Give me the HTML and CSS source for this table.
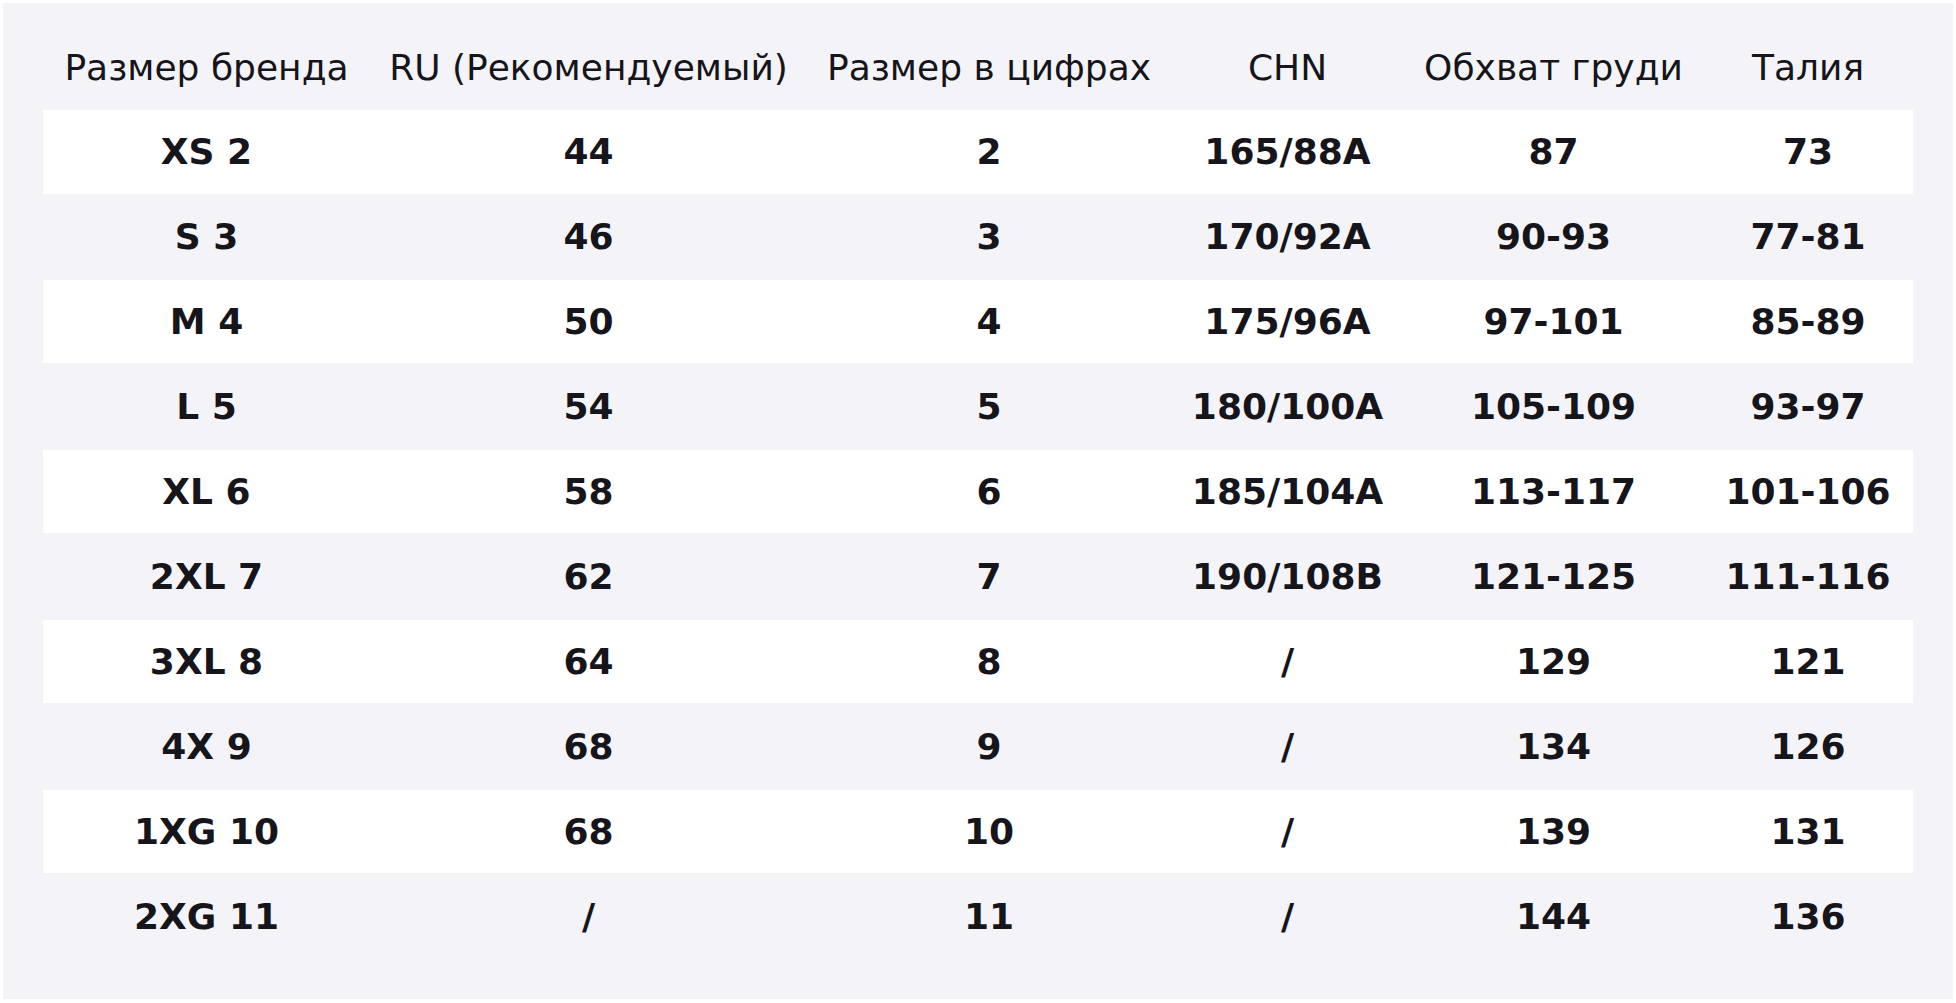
FILE: index.html
```html
<!DOCTYPE html>
<html lang="ru">
<head>
<meta charset="utf-8">
<title>Таблица размеров</title>
<link rel="stylesheet" href="styles.css">
</head>
<body>
<div class="panel">
  <table class="sizes">
    <colgroup>
      <col class="c1"><col class="c2"><col class="c3"><col class="c4"><col class="c5"><col class="c6">
    </colgroup>
    <thead>
      <tr>
        <th>Размер бренда</th>
        <th>RU (Рекомендуемый)</th>
        <th>Размер в цифрах</th>
        <th>CHN</th>
        <th>Обхват груди</th>
        <th>Талия</th>
      </tr>
    </thead>
    <tbody>
      <tr><td>XS 2</td><td>44</td><td>2</td><td>165/88A</td><td>87</td><td>73</td></tr>
      <tr><td>S 3</td><td>46</td><td>3</td><td>170/92A</td><td>90-93</td><td>77-81</td></tr>
      <tr><td>M 4</td><td>50</td><td>4</td><td>175/96A</td><td>97-101</td><td>85-89</td></tr>
      <tr><td>L 5</td><td>54</td><td>5</td><td>180/100A</td><td>105-109</td><td>93-97</td></tr>
      <tr><td>XL 6</td><td>58</td><td>6</td><td>185/104A</td><td>113-117</td><td>101-106</td></tr>
      <tr><td>2XL 7</td><td>62</td><td>7</td><td>190/108B</td><td>121-125</td><td>111-116</td></tr>
      <tr><td>3XL 8</td><td>64</td><td>8</td><td>/</td><td>129</td><td>121</td></tr>
      <tr><td>4X 9</td><td>68</td><td>9</td><td>/</td><td>134</td><td>126</td></tr>
      <tr><td>1XG 10</td><td>68</td><td>10</td><td>/</td><td>139</td><td>131</td></tr>
      <tr><td>2XG 11</td><td>/</td><td>11</td><td>/</td><td>144</td><td>136</td></tr>
    </tbody>
  </table>
</div>
</body>
</html>
```
FILE: styles.css
```css
html, body {
  margin: 0;
  padding: 0;
  background: #ffffff;
}

body {
  font-family: "DejaVu Sans", "Noto Sans", sans-serif;
  color: #15151b;
}

.panel {
  margin: 3px;
  background: #f4f4f8;
  padding: 21px 40px 40px;
}

.sizes {
  width: 100%;
  border-collapse: collapse;
  table-layout: fixed;
  font-size: 36px;
}

.c1 { width: 327px; }
.c2 { width: 437px; }
.c3 { width: 364px; }
.c4 { width: 233px; }
.c5 { width: 299px; }
.c6 { width: 210px; }

.sizes th,
.sizes td {
  padding: 0;
  text-align: center;
  vertical-align: middle;
  white-space: nowrap;
}

.sizes th {
  height: 86px;
  font-weight: normal;
}

.sizes td {
  font-weight: bold;
}

.sizes tbody tr:nth-child(odd) {
  background: #ffffff;
}

.sizes tbody tr:nth-child(odd) td {
  height: 83.5px;
}

.sizes tbody tr:nth-child(even) {
  background: #f4f4f8;
}

.sizes tbody tr:nth-child(even) td {
  height: 86.4px;
}
```
